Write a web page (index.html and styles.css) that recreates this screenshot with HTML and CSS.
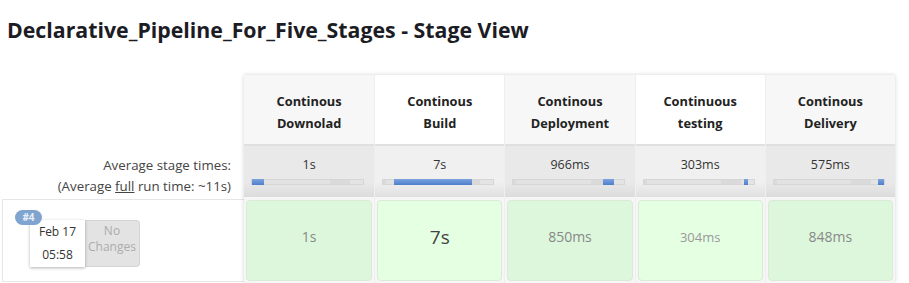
FILE: index.html
```html
<!DOCTYPE html>
<html lang="en">
<head>
	<meta charset="UTF-8">
	<title>Stage View</title>
	<link rel="stylesheet" href="styles.css">
</head>
<body>
	<h1 class="title">Declarative_Pipeline_For_Five_Stages - Stage View</h1>

	<div class="stage-view">
		<div class="labels">
			<div class="label-head"></div>
			<div class="label-avg">
				<p>Average stage times:</p>
				<p>(Average <u>full</u> run time: ~11s)</p>
			</div>
			<div class="label-run">
				<div class="run-box">
					<span class="badge">#4</span>
					<div class="run-date">
						<p>Feb 17</p>
						<p>05:58</p>
					</div>
					<div class="run-changes">No<br>Changes</div>
				</div>
			</div>
		</div>

		<div class="stages">
			<div class="col odd">
				<div class="head">Continous<br>Downolad</div>
				<div class="avg">
					<p>1s</p>
					<div class="bar"><span class="fill" style="left: 0; width: 11%"></span></div>
				</div>
				<div class="run"><div class="cell t-small">1s</div></div>
			</div>
			<div class="col even">
				<div class="head">Continous<br>Build</div>
				<div class="avg">
					<p>7s</p>
					<div class="bar"><span class="fill" style="left: 10%; width: 71%"></span></div>
				</div>
				<div class="run"><div class="cell t-big">7s</div></div>
			</div>
			<div class="col odd">
				<div class="head">Continous<br>Deployment</div>
				<div class="avg">
					<p>966ms</p>
					<div class="bar"><span class="fill" style="left: 81%; width: 10%"></span></div>
				</div>
				<div class="run"><div class="cell t-small">850ms</div></div>
			</div>
			<div class="col even">
				<div class="head">Continuous<br>testing</div>
				<div class="avg">
					<p>303ms</p>
					<div class="bar"><span class="fill" style="left: 91%; width: 4%"></span></div>
				</div>
				<div class="run"><div class="cell t-tiny">304ms</div></div>
			</div>
			<div class="col odd">
				<div class="head">Continous<br>Delivery</div>
				<div class="avg">
					<p>575ms</p>
					<div class="bar"><span class="fill" style="left: 95%; width: 5%"></span></div>
				</div>
				<div class="run"><div class="cell t-small">848ms</div></div>
			</div>
		</div>
	</div>
</body>
</html>
```

FILE: styles.css
```css
body {
	margin: 0;
	background-color: #fff;
	color: #333;
	font-family: "Open Sans", "Noto Sans", sans-serif;
	overflow: hidden;
}
p {
	margin: 0;
}
.title {
	margin: 16px 0 0 7px;
	font-size: 21.3px;
	line-height: 28px;
	font-weight: 700;
	color: #1c1c24;
}

/* stage view table */
.stage-view {
	display: flex;
	margin-top: 31px;
}
.labels {
	width: 244px;
	flex: none;
}
.label-head {
	height: 71px;
}
.label-avg {
	height: 51px;
	padding-right: 13px;
	padding-top: 9px;
	box-sizing: border-box;
	text-align: right;
	font-size: 13.3px;
	line-height: 21px;
	color: #444;
}
.label-avg u {
	text-decoration-thickness: 1px;
}
.label-run {
	margin-top: 2px;
	height: 83px;
	border: 1px solid #e6e6e6;
	border-right: none;
	margin-left: 2px;
	box-sizing: border-box;
}
.run-box {
	position: relative;
	display: flex;
	margin: 20px 0 0 27px;
}
.badge {
	position: absolute;
	left: -15px;
	top: -10px;
	z-index: 2;
	width: 27px;
	height: 15px;
	border-radius: 8px;
	background-color: #7fa4cf;
	color: #e8eef7;
	font-size: 10px;
	line-height: 15px;
	font-weight: 700;
	text-align: center;
}
.run-date {
	width: 55px;
	height: 47px;
	background-color: #fff;
	box-shadow: 0 1px 3px rgba(0,0,0,.3);
	font-size: 12px;
	line-height: 23px;
	text-align: center;
	color: #333;
	z-index: 1;
}
.run-changes {
	width: 55px;
	height: 47px;
	box-sizing: border-box;
	padding-top: 2px;
	background-color: #e3e3e3;
	border: 1px solid #d4d4d4;
	border-left: none;
	border-radius: 0 4px 4px 0;
	font-size: 12px;
	line-height: 16px;
	text-align: center;
	color: #acacac;
}

.stages {
	display: flex;
	width: 651px;
	box-shadow: 0 0 4px rgba(0,0,0,.18);
}
.col {
	width: 130.2px;
	border-left: 1px solid #efefef;
	box-sizing: border-box;
}
.col:first-child {
	border-left: none;
}
.head {
	height: 71px;
	display: flex;
	align-items: center;
	justify-content: center;
	padding-top: 5px;
	text-align: center;
	font-size: 12.8px;
	line-height: 22px;
	font-weight: 700;
	color: #222;
	border-bottom: 2px solid #e0e0e0;
	box-sizing: border-box;
}
.odd .head { background-color: #f7f7f7; }
.even .head { background-color: #fff; }
.avg {
	height: 51px;
	box-sizing: border-box;
	padding-top: 9px;
	text-align: center;
	font-size: 12.5px;
	line-height: 20px;
	color: #333;
}
.odd .avg { background: linear-gradient(#e9e9e9 70%, #dcdcdc); }
.even .avg { background: linear-gradient(#f0f0f0 70%, #e0e0e0); }
.bar {
	position: relative;
	height: 4px;
	margin: 4px 10px 0 7px;
	background: linear-gradient(90deg, #dadada 3%, #e2e2e2 3%, #e2e2e2 70%, #dadada 70%, #dadada 88%, #e4e4e4 88%);
	border: 1px solid #d6d6d6;
}
.fill {
	position: absolute;
	top: -1px;
	height: 6px;
	background: linear-gradient(#7aa3e0, #4f7fcb);
}
.run {
	height: 86px;
	padding: 3px 2px 0;
	box-sizing: border-box;
	background-color: #f6f6f6;
}
.cell {
	height: 81px;
	display: flex;
	align-items: center;
	justify-content: center;
	padding-bottom: 8px;
	border: 1px solid #d9ead6;
	border-radius: 4px;
	box-sizing: border-box;
	color: #888;
}
.odd .cell { background-color: #ddf7dc; }
.even .cell { background-color: #e5ffe3; }
.t-small { font-size: 14px; }
.t-tiny { font-size: 13px; color: #999; }
.t-big { font-size: 19px; color: #444; }
```
